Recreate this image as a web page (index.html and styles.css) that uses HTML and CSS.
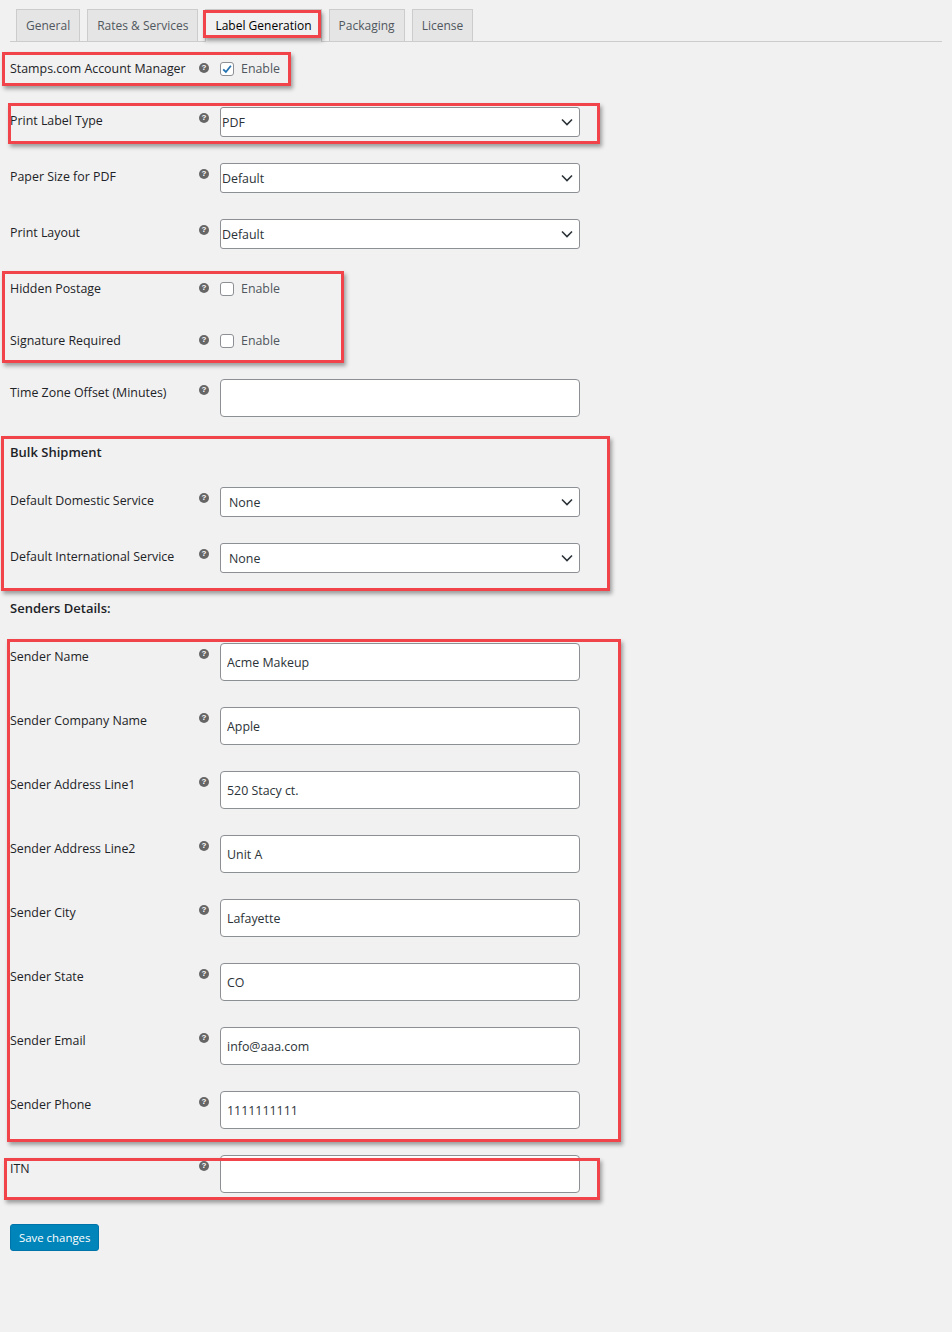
FILE: index.html
```html
<!DOCTYPE html>
<html lang="en">
<head>
  <meta charset="UTF-8">
  <title>Stamps.com Settings - Label Generation</title>
  <link rel="stylesheet" href="styles.css">
</head>
<body>
  <div class="page">
    <nav class="tabs">
      <a class="tab">General</a>
      <a class="tab">Rates &amp; Services</a>
      <a class="tab tab-active">Label Generation</a>
      <a class="tab">Packaging</a>
      <a class="tab">License</a>
    </nav>

    <form class="settings">
      <div class="row row-check">
        <label class="row-label">Stamps.com Account Manager</label>
        <span class="help">?</span>
        <div class="field">
          <span class="check"><svg width="12" height="12" viewBox="0 0 12 12"><path d="M2.2 6.3 L4.9 9 L9.9 2.8" fill="none" stroke="#2271b1" stroke-width="1.8"/></svg></span>
          <span class="check-text">Enable</span>
        </div>
      </div>

      <div class="row">
        <label class="row-label">Print Label Type</label>
        <span class="help">?</span>
        <div class="select-wrap">
          <select class="select select-tight"><option>PDF</option></select>
          <svg class="chevron" width="12" height="8" viewBox="0 0 12 8"><path d="M1 1.5 L6 6.5 L11 1.5" fill="none" stroke="#2c3338" stroke-width="1.6"/></svg>
        </div>
      </div>

      <div class="row">
        <label class="row-label">Paper Size for PDF</label>
        <span class="help">?</span>
        <div class="select-wrap">
          <select class="select select-tight"><option>Default</option></select>
          <svg class="chevron" width="12" height="8" viewBox="0 0 12 8"><path d="M1 1.5 L6 6.5 L11 1.5" fill="none" stroke="#2c3338" stroke-width="1.6"/></svg>
        </div>
      </div>

      <div class="row">
        <label class="row-label">Print Layout</label>
        <span class="help">?</span>
        <div class="select-wrap">
          <select class="select select-tight"><option>Default</option></select>
          <svg class="chevron" width="12" height="8" viewBox="0 0 12 8"><path d="M1 1.5 L6 6.5 L11 1.5" fill="none" stroke="#2c3338" stroke-width="1.6"/></svg>
        </div>
      </div>

      <div class="row row-check">
        <label class="row-label">Hidden Postage</label>
        <span class="help">?</span>
        <div class="field">
          <span class="check"></span>
          <span class="check-text">Enable</span>
        </div>
      </div>

      <div class="row row-check">
        <label class="row-label">Signature Required</label>
        <span class="help">?</span>
        <div class="field">
          <span class="check"></span>
          <span class="check-text">Enable</span>
        </div>
      </div>

      <div class="row">
        <label class="row-label">Time Zone Offset (Minutes)</label>
        <span class="help">?</span>
        <input class="text-input" type="text" value="">
      </div>

      <h3 class="section-title">Bulk Shipment</h3>

      <div class="row">
        <label class="row-label">Default Domestic Service</label>
        <span class="help">?</span>
        <div class="select-wrap">
          <select class="select"><option>None</option></select>
          <svg class="chevron" width="12" height="8" viewBox="0 0 12 8"><path d="M1 1.5 L6 6.5 L11 1.5" fill="none" stroke="#2c3338" stroke-width="1.6"/></svg>
        </div>
      </div>

      <div class="row">
        <label class="row-label">Default International Service</label>
        <span class="help">?</span>
        <div class="select-wrap">
          <select class="select"><option>None</option></select>
          <svg class="chevron" width="12" height="8" viewBox="0 0 12 8"><path d="M1 1.5 L6 6.5 L11 1.5" fill="none" stroke="#2c3338" stroke-width="1.6"/></svg>
        </div>
      </div>

      <h3 class="section-title">Senders Details:</h3>

      <div class="row">
        <label class="row-label">Sender Name</label>
        <span class="help">?</span>
        <input class="text-input" type="text" value="Acme Makeup">
      </div>

      <div class="row">
        <label class="row-label">Sender Company Name</label>
        <span class="help">?</span>
        <input class="text-input" type="text" value="Apple">
      </div>

      <div class="row">
        <label class="row-label">Sender Address Line1</label>
        <span class="help">?</span>
        <input class="text-input" type="text" value="520 Stacy ct.">
      </div>

      <div class="row">
        <label class="row-label">Sender Address Line2</label>
        <span class="help">?</span>
        <input class="text-input" type="text" value="Unit A">
      </div>

      <div class="row">
        <label class="row-label">Sender City</label>
        <span class="help">?</span>
        <input class="text-input" type="text" value="Lafayette">
      </div>

      <div class="row">
        <label class="row-label">Sender State</label>
        <span class="help">?</span>
        <input class="text-input" type="text" value="CO">
      </div>

      <div class="row">
        <label class="row-label">Sender Email</label>
        <span class="help">?</span>
        <input class="text-input" type="text" value="info@aaa.com">
      </div>

      <div class="row">
        <label class="row-label">Sender Phone</label>
        <span class="help">?</span>
        <input class="text-input" type="text" value="1111111111">
      </div>

      <div class="row">
        <label class="row-label">ITN</label>
        <span class="help">?</span>
        <input class="text-input" type="text" value="">
      </div>

      <div class="actions">
        <button class="save-button" type="button">Save changes</button>
      </div>
    </form>

    <!-- red highlight boxes from the screenshot -->
    <div class="mark mark-tab"></div>
    <div class="mark mark-account"></div>
    <div class="mark mark-label-type"></div>
    <div class="mark mark-postage"></div>
    <div class="mark mark-bulk"></div>
    <div class="mark mark-sender"></div>
    <div class="mark mark-itn"></div>
  </div>
</body>
</html>
```

FILE: styles.css
```css
body {
  margin: 0;
  padding: 0;
  background-color: #f1f1f1;
  font-family: "Open Sans", "Noto Sans", Arial, sans-serif;
  color: #23282d;
}

.page {
  position: relative;
  width: 952px;
  height: 1332px;
  padding: 0 10px;
  box-sizing: border-box;
}

/* tabs */

.tabs {
  display: flex;
  gap: 7px;
  padding: 9px 0 0 6px;
  border-bottom: 1px solid #cccccc;
  height: 32px;
  box-sizing: content-box;
}

.tab {
  display: block;
  height: 31px;
  padding: 0 9px;
  line-height: 31px;
  font-size: 12px;
  color: #50575e;
  background-color: #e5e5e5;
  border: 1px solid #cccccc;
  border-bottom: none;
}

.tab-active {
  height: 32px;
  margin-bottom: -1px;
  color: #000000;
  background-color: #f1f1f1;
}

/* form rows */

.settings {
  display: flex;
  flex-direction: column;
  gap: 26px;
  padding-top: 13px;
}

.row {
  display: flex;
  align-items: flex-start;
}

.row-check {
  margin: 3px 0 2px;
}

.row-label {
  width: 189px;
  padding-top: 4px;
  font-size: 12.4px;
  line-height: 20px;
  font-weight: 500;
  color: #1d2327;
}

.row-check .row-label {
  padding-top: 1px;
}

.help {
  width: 10px;
  height: 10px;
  margin-top: 6px;
  margin-right: 11px;
  border-radius: 50%;
  background-color: #666666;
  color: #ffffff;
  font-family: "Liberation Sans", Arial, sans-serif;
  font-size: 8px;
  font-weight: bold;
  line-height: 10px;
  text-align: center;
}

.row-check .help {
  margin-top: 5px;
}

.field {
  display: flex;
  align-items: center;
  height: 21px;
}

.check {
  display: flex;
  align-items: center;
  justify-content: center;
  width: 14px;
  height: 14px;
  border: 1px solid #8c8f94;
  border-radius: 3px;
  background-color: #ffffff;
  box-sizing: border-box;
}

.check-text {
  margin-left: 7px;
  font-size: 12.4px;
  color: #50575e;
}

.select-wrap {
  position: relative;
  width: 360px;
  height: 30px;
}

.select {
  appearance: none;
  -webkit-appearance: none;
  width: 100%;
  height: 30px;
  padding: 0 24px 0 8px;
  border: 1px solid #8c8f94;
  border-radius: 3px;
  background-color: #ffffff;
  font-family: "Open Sans", "Noto Sans", Arial, sans-serif;
  font-size: 12.4px;
  color: #2c3338;
}

.select-tight {
  padding-left: 1px;
}

.chevron {
  position: absolute;
  right: 7px;
  top: 11px;
}

.text-input {
  width: 360px;
  height: 38px;
  padding: 0 6px;
  border: 1px solid #8c8f94;
  border-radius: 4px;
  background-color: #ffffff;
  box-sizing: border-box;
  font-family: "Open Sans", "Noto Sans", Arial, sans-serif;
  font-size: 12.4px;
  color: #2c3338;
}

.section-title {
  margin: -1px 0;
  font-size: 13px;
  line-height: 20px;
  font-weight: 600;
  color: #1d2327;
}

.actions {
  padding-top: 5px;
}

.save-button {
  height: 27px;
  padding: 0 8px;
  border: 1px solid #0073aa;
  border-radius: 3px;
  background-color: #0085ba;
  color: #ffffff;
  font-family: "Open Sans", "Noto Sans", Arial, sans-serif;
  font-size: 11.4px;
  cursor: pointer;
}

/* annotation boxes */

.mark {
  position: absolute;
  border: 3px solid #f1444a;
  box-shadow: 2px 3px 4px rgba(0, 0, 0, 0.35);
  pointer-events: none;
}

.mark-tab {
  left: 203px;
  top: 10px;
  width: 112px;
  height: 22px;
}

.mark-account {
  left: 2px;
  top: 52px;
  width: 283px;
  height: 28px;
}

.mark-label-type {
  left: 8px;
  top: 103px;
  width: 586px;
  height: 35px;
}

.mark-postage {
  left: 2px;
  top: 271px;
  width: 336px;
  height: 86px;
}

.mark-bulk {
  left: 1px;
  top: 436px;
  width: 603px;
  height: 149px;
}

.mark-sender {
  left: 7px;
  top: 639px;
  width: 608px;
  height: 497px;
}

.mark-itn {
  left: 4px;
  top: 1158px;
  width: 590px;
  height: 36px;
}
```
